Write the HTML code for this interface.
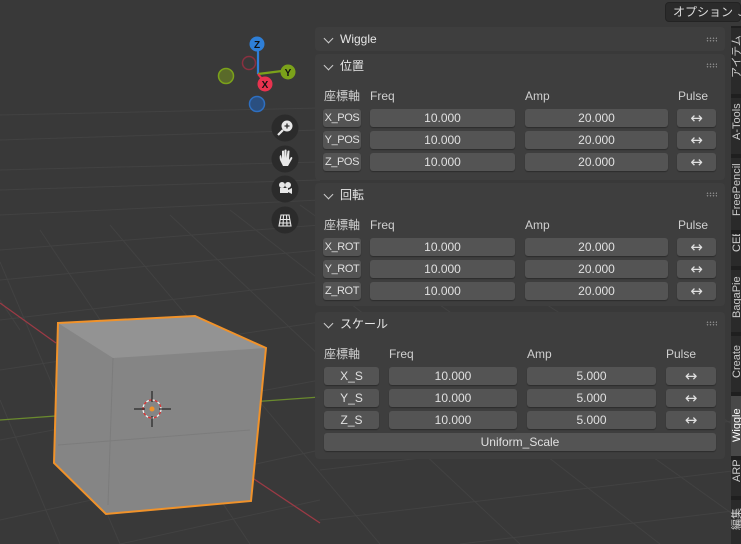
<!DOCTYPE html>
<html><head><meta charset="utf-8"><style>
*{margin:0;padding:0;box-sizing:border-box}
body{width:741px;height:544px;overflow:hidden;background:#393939;font-family:"Liberation Sans","Noto Sans CJK JP",sans-serif;font-size:12px;color:#dcdcdc;position:relative}
.abs{position:absolute}
.panel{position:absolute;left:315px;width:410px;background:rgba(62,62,62,0.95);border-radius:4px}
.hdr{position:absolute;left:8px;font-size:12px;line-height:14px;color:#e6e6e6}
.hdr .chev{display:inline-block;width:7px;height:7px;border-right:1.3px solid #ccc;border-bottom:1.3px solid #ccc;transform:rotate(45deg);margin:0 8px 3px 2px;vertical-align:middle}
.grip{position:absolute;right:8px;width:11px;height:5px;background-image:radial-gradient(circle,#888 0.7px,transparent 0.9px);background-size:3px 2.5px}
.btn{position:absolute;height:18px;background:#545454;border-radius:3px;text-align:center;line-height:18px;color:#e0e0e0;box-shadow:0 1px 1px rgba(0,0,0,0.3);font-size:12px;white-space:nowrap;overflow:hidden}
.sm{font-size:11px;letter-spacing:-0.4px}
.ar{font-family:"DejaVu Sans",sans-serif;font-size:15px;line-height:19px}
.lbl{position:absolute;color:#d0d0d0;line-height:14px;font-size:12px}
.tabs{position:absolute;left:731px;top:26px;width:10px;height:518px;background:#1f1f1f}
.tab{position:absolute;left:0;width:10px;background:#2a2a2a;overflow:hidden}
.tab span{position:absolute;left:0px;bottom:2px;transform-origin:0 0;transform:rotate(-90deg);white-space:nowrap;font-size:11px;line-height:12px;color:#ccc;display:block}
</style></head><body>
<svg class="abs" style="left:0;top:0" width="741" height="544">
<g stroke="#424242" stroke-width="1" fill="none">
<path d="M0 250 L320 225 M0 280 L320 250 M0 320 L320 282 M0 370 L320 322 M0 440 L320 380 M0 520 L320 450 M120 544 L320 500 M0 215 L320 200 M0 190 L320 180 M0 170 L320 162"/>
<path d="M0 262 L120 544 M40 230 L250 544 M110 225 L380 544 M170 215 L520 544 M230 210 L660 544 M300 205 L741 520 M400 210 L741 430 M0 400 L60 544 M0 300 L20 330"/>
<path d="M320 470 L741 420 M320 520 L741 470 M460 544 L741 510 M0 140 L320 130 M0 115 L320 108"/>
</g>
<path d="M0 303 L56 343 M185 433 L320 523" stroke="#9b3a45" stroke-width="1.3"/>
<path d="M0 420 L320 397" stroke="#6a8a2e" stroke-width="1.3"/>
<polygon points="58,323 195,316 266,348 251,501 106,514 54,463" fill="#858585"/>
<polygon points="58,323 195,316 266,348 113,358" fill="#939393"/>
<path d="M113,358 L108,505 M58,445 L250,430" stroke="#7c7c7c" stroke-width="1" fill="none"/>
<polygon points="58,323 195,316 266,348 251,501 106,514 54,463" fill="none" stroke="#f0922a" stroke-width="2"/>
<circle cx="152" cy="409" r="9" fill="none" stroke="#eee" stroke-width="1.3" stroke-dasharray="3 3"/>
<circle cx="152" cy="409" r="9" fill="none" stroke="#d33" stroke-width="1.3" stroke-dasharray="3 3" stroke-dashoffset="3"/>
<path d="M152 391V402M152 416V427M134 409H145M159 409H171" stroke="#111" stroke-width="1"/>
<circle cx="152" cy="409" r="2.5" fill="#f0922a"/>
<circle cx="249" cy="63" r="6.5" fill="none" stroke="#8a3040" stroke-width="1.5"/>
<circle cx="226" cy="76" r="7.5" fill="#5a6a2a" stroke="#7ba21a" stroke-width="1.5"/>
<circle cx="257" cy="104" r="7.5" fill="#2a4f80" stroke="#2e6fc0" stroke-width="1.5"/>
<path d="M258 74 V50" stroke="#2e7fd8" stroke-width="2.2"/>
<path d="M258 74 L282 71" stroke="#7ba21a" stroke-width="2.2"/>
<path d="M258 74 L262 79" stroke="#e8334f" stroke-width="2.2"/>
<circle cx="257" cy="44" r="7.5" fill="#2e7fd8"/>
<circle cx="288" cy="72" r="7.5" fill="#7ba21a"/>
<circle cx="265" cy="84" r="7.5" fill="#e8334f"/>
<g font-family="Liberation Sans" font-size="10" text-anchor="middle" font-weight="bold">
<text x="257" y="48" fill="#111">Z</text><text x="288" y="76" fill="#111">Y</text><text x="265" y="88" fill="#111">X</text></g>
<g fill="#2b2b2b"><circle cx="285" cy="128" r="13.5"/><circle cx="285" cy="159" r="13.5"/><circle cx="285" cy="189" r="13.5"/><circle cx="285" cy="220" r="13.5"/></g>
<circle cx="287" cy="126" r="5.5" fill="#e8e8e8"/><path d="M283 130 L278 135" stroke="#e8e8e8" stroke-width="2.2"/>
<path d="M284.5 126H289.5M287 123.5V128.5" stroke="#2b2b2b" stroke-width="1.3"/>
<path d="M280 160 Q279 155 281 155 L282 159 L282 151 Q283.5 150 284 151 L284 158 L284.5 150 Q286 149 286.5 150 L286.5 158 L287.5 151 Q289 150 289.5 151 L289 160 L291 157 Q293 157 292 159 L288 166 L283 166 Z" fill="#e8e8e8"/>
<circle cx="282" cy="185" r="3" fill="#e8e8e8"/><circle cx="288" cy="185" r="3" fill="#e8e8e8"/>
<rect x="280" y="188" width="8" height="5" fill="#e8e8e8"/><path d="M288 190 L292 188 V194 L288 192Z" fill="#e8e8e8"/>
<path d="M279 226 L281 215 H289 L291 226 Z M280 219.5 H290 M279.5 223 H290.5 M283.5 215 L283 226 M286.5 215 L287 226" fill="none" stroke="#e8e8e8" stroke-width="1.1"/>
</svg>

<div class="abs" style="left:665px;top:2px;width:76px;height:20px;background:#2b2b2b;border:1px solid #232323;border-radius:4px;color:#ddd;line-height:18px;padding-left:7px;font-size:12px;white-space:nowrap">オプション <span style="font-size:9px">⌄</span></div>

<div class="panel" style="top:27px;height:24px"><div class="hdr" style="top:5px"><span class="chev"></span>Wiggle</div><div class="grip" style="top:10px"></div></div>
<div class="panel" style="top:54px;height:126px"><div class="hdr" style="top:5px"><span class="chev"></span>位置</div><div class="grip" style="top:9px"></div></div>
<div class="panel" style="top:183px;height:123px"><div class="hdr" style="top:5px"><span class="chev"></span>回転</div><div class="grip" style="top:9px"></div></div>
<div class="panel" style="top:312px;height:147px"><div class="hdr" style="top:5px"><span class="chev"></span>スケール</div><div class="grip" style="top:9px"></div></div>

<div class="lbl" style="left:324px;top:89px">座標軸</div><div class="lbl" style="left:370px;top:89px">Freq</div><div class="lbl" style="left:525px;top:89px">Amp</div><div class="lbl" style="left:678px;top:89px">Pulse</div>
<div class="btn sm" style="left:323px;top:109px;width:38px">X_POS</div><div class="btn" style="left:370px;top:109px;width:145px">10.000</div><div class="btn" style="left:525px;top:109px;width:143px">20.000</div><div class="btn ar" style="left:677px;top:109px;width:39px">↔</div>
<div class="btn sm" style="left:323px;top:131px;width:38px">Y_POS</div><div class="btn" style="left:370px;top:131px;width:145px">10.000</div><div class="btn" style="left:525px;top:131px;width:143px">20.000</div><div class="btn ar" style="left:677px;top:131px;width:39px">↔</div>
<div class="btn sm" style="left:323px;top:153px;width:38px">Z_POS</div><div class="btn" style="left:370px;top:153px;width:145px">10.000</div><div class="btn" style="left:525px;top:153px;width:143px">20.000</div><div class="btn ar" style="left:677px;top:153px;width:39px">↔</div>

<div class="lbl" style="left:324px;top:218px">座標軸</div><div class="lbl" style="left:370px;top:218px">Freq</div><div class="lbl" style="left:525px;top:218px">Amp</div><div class="lbl" style="left:678px;top:218px">Pulse</div>
<div class="btn sm" style="left:323px;top:238px;width:38px">X_ROT</div><div class="btn" style="left:370px;top:238px;width:145px">10.000</div><div class="btn" style="left:525px;top:238px;width:143px">20.000</div><div class="btn ar" style="left:677px;top:238px;width:39px">↔</div>
<div class="btn sm" style="left:323px;top:260px;width:38px">Y_ROT</div><div class="btn" style="left:370px;top:260px;width:145px">10.000</div><div class="btn" style="left:525px;top:260px;width:143px">20.000</div><div class="btn ar" style="left:677px;top:260px;width:39px">↔</div>
<div class="btn sm" style="left:323px;top:282px;width:38px">Z_ROT</div><div class="btn" style="left:370px;top:282px;width:145px">10.000</div><div class="btn" style="left:525px;top:282px;width:143px">20.000</div><div class="btn ar" style="left:677px;top:282px;width:39px">↔</div>

<div class="lbl" style="left:324px;top:347px">座標軸</div><div class="lbl" style="left:389px;top:347px">Freq</div><div class="lbl" style="left:527px;top:347px">Amp</div><div class="lbl" style="left:666px;top:347px">Pulse</div>
<div class="btn" style="left:324px;top:367px;width:55px">X_S</div><div class="btn" style="left:389px;top:367px;width:128px">10.000</div><div class="btn" style="left:527px;top:367px;width:129px">5.000</div><div class="btn ar" style="left:666px;top:367px;width:50px">↔</div>
<div class="btn" style="left:324px;top:389px;width:55px">Y_S</div><div class="btn" style="left:389px;top:389px;width:128px">10.000</div><div class="btn" style="left:527px;top:389px;width:129px">5.000</div><div class="btn ar" style="left:666px;top:389px;width:50px">↔</div>
<div class="btn" style="left:324px;top:411px;width:55px">Z_S</div><div class="btn" style="left:389px;top:411px;width:128px">10.000</div><div class="btn" style="left:527px;top:411px;width:129px">5.000</div><div class="btn ar" style="left:666px;top:411px;width:50px">↔</div>
<div class="btn" style="left:324px;top:433px;width:392px">Uniform_Scale</div>

<div class="tabs">
<div class="tab" style="top:2px;height:66px"><span style="bottom:4px">アイテム</span></div>
<div class="tab" style="top:72px;height:56px"><span>A-Tools</span></div>
<div class="tab" style="top:132px;height:72px"><span>FreePencil</span></div>
<div class="tab" style="top:208px;height:32px"><span>CEB</span></div>
<div class="tab" style="top:244px;height:62px"><span>BagaPie</span></div>
<div class="tab" style="top:310px;height:56px"><span>Create</span></div>
<div class="tab" style="top:370px;height:60px;background:#484848"><span style="color:#fff">Wiggle</span></div>
<div class="tab" style="top:434px;height:36px"><span>ARP</span></div>
<div class="tab" style="top:474px;height:44px"><span>編集</span></div>
</div>
</body></html>
